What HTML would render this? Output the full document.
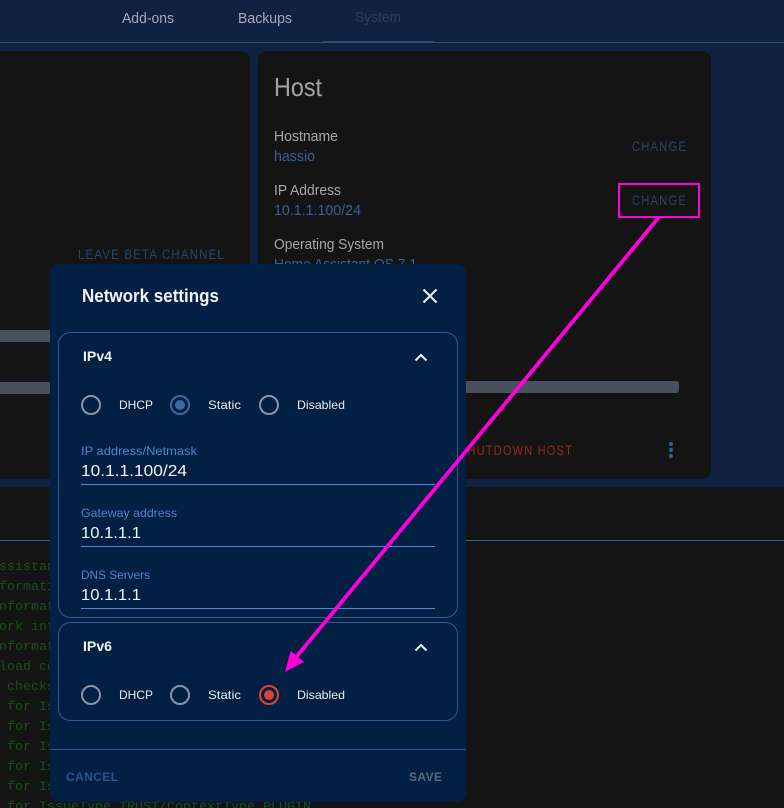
<!DOCTYPE html>
<html>
<head>
<meta charset="utf-8">
<style>
html,body{margin:0;padding:0;width:784px;height:808px;overflow:hidden;background:#112142}
svg{display:block}
text{font-family:"Liberation Sans",sans-serif}
.m{font-family:"Liberation Mono",monospace;font-size:13.33px;fill:#1c4f1c}
.b{font-weight:bold}
</style>
</head>
<body>
<svg width="784" height="808" viewBox="0 0 784 808" xmlns="http://www.w3.org/2000/svg">
<rect width="784" height="808" fill="#112142"/>
<!-- top tabs -->
<text x="122" y="23" font-size="15" fill="#a6abb5" textLength="52" lengthAdjust="spacingAndGlyphs">Add-ons</text>
<text x="238" y="23" font-size="15" fill="#a6abb5" textLength="54" lengthAdjust="spacingAndGlyphs">Backups</text>
<text x="355" y="22" font-size="15" fill="#2a3f66" textLength="46" lengthAdjust="spacingAndGlyphs">System</text>
<rect x="0" y="42" width="784" height="1" fill="#2c4c7c"/>
<rect x="323" y="41" width="111" height="1" fill="#2a4a78"/>

<!-- cards -->
<rect x="-20" y="51" width="270" height="428" rx="9" fill="#141414"/>
<rect x="258" y="51" width="453" height="428" rx="9" fill="#141414"/>
<text x="274" y="96" font-size="26" fill="#a4a4a4" textLength="48" lengthAdjust="spacingAndGlyphs">Host</text>
<text x="274" y="141" font-size="15" fill="#a8a8a8" textLength="64" lengthAdjust="spacingAndGlyphs">Hostname</text>
<text x="274" y="161" font-size="15" fill="#35609c" textLength="41" lengthAdjust="spacingAndGlyphs">hassio</text>
<text x="274" y="195" font-size="15" fill="#a8a8a8" textLength="67" lengthAdjust="spacingAndGlyphs">IP Address</text>
<text x="274" y="215" font-size="15" fill="#35609c" textLength="87" lengthAdjust="spacingAndGlyphs">10.1.1.100/24</text>
<text x="274" y="249" font-size="15" fill="#a8a8a8" textLength="110" lengthAdjust="spacingAndGlyphs">Operating System</text>
<text x="274" y="269" font-size="15" fill="#35609c" textLength="143" lengthAdjust="spacingAndGlyphs">Home Assistant OS 7.1</text>
<text x="632" y="151" font-size="14" letter-spacing="1.500" fill="#2a4468" textLength="55" lengthAdjust="spacingAndGlyphs">CHANGE</text>
<text x="632" y="205" font-size="14" letter-spacing="1.500" fill="#2a4468" textLength="55" lengthAdjust="spacingAndGlyphs">CHANGE</text>
<text x="78" y="259" font-size="14" letter-spacing="1.500" fill="#2a4468" textLength="147" lengthAdjust="spacingAndGlyphs">LEAVE BETA CHANNEL</text>
<rect x="-10" y="330" width="70" height="12" fill="#4a4f5c"/>
<rect x="-10" y="382" width="70" height="12" fill="#4a4f5c"/>
<rect x="440" y="381" width="239" height="12" rx="3" fill="#4a4f5c"/>
<text x="459" y="455" font-size="14" letter-spacing="1.500" fill="#8e2a22" textLength="114" lengthAdjust="spacingAndGlyphs">SHUTDOWN HOST</text>
<circle cx="671" cy="444" r="2" fill="#35609c"/>
<circle cx="671" cy="450" r="2" fill="#35609c"/>
<circle cx="671" cy="456" r="2" fill="#35609c"/>

<!-- log panel -->
<rect x="0" y="487" width="784" height="321" fill="#141414"/>
<rect x="0" y="540" width="784" height="1" fill="#2f5c9c"/>
<text class="m" x="-9" y="570">Assistant</text>
<text class="m" x="-17" y="590">Information</text>
<text class="m" x="-9" y="610">Information</text>
<text class="m" x="-33" y="630">Network info</text>
<text class="m" x="-9" y="650">Information</text>
<text class="m" x="-1" y="670">load config</text>
<text class="m" x="7" y="690">checks</text>
<text class="m" x="7" y="710">for Issue</text>
<text class="m" x="7" y="730">for Issue</text>
<text class="m" x="7" y="750">for Issue</text>
<text class="m" x="7" y="770">for Issue</text>
<text class="m" x="7" y="790">for Issue</text>
<text class="m" x="7" y="810" textLength="304" lengthAdjust="spacingAndGlyphs">for IssueType.TRUST/ContextType.PLUGIN</text>

<!-- dialog -->
<rect x="50" y="264" width="416" height="538" rx="9" fill="#021f44"/>
<text x="82" y="302" font-size="18" class="b" fill="#f2f4f7" textLength="137" lengthAdjust="spacingAndGlyphs">Network settings</text>
<path d="M423.5 289.5 L436.5 302.5 M436.5 289.5 L423.5 302.5" stroke="#f2f4f7" stroke-width="2" fill="none"/>

<rect x="58.5" y="332.5" width="399" height="285" rx="12" fill="none" stroke="#2f5a94"/>
<text x="83" y="361" font-size="14" class="b" fill="#f2f4f7" textLength="29" lengthAdjust="spacingAndGlyphs">IPv4</text>
<path d="M415.5 360.5 L421 355 L426.500 360.5" stroke="#f2f4f7" stroke-width="2" fill="none"/>

<circle cx="91" cy="405" r="9" fill="none" stroke="#8a93a3" stroke-width="2"/>
<text x="119" y="409" font-size="12" fill="#e8ecf2" textLength="34" lengthAdjust="spacingAndGlyphs">DHCP</text>
<circle cx="180" cy="405" r="9" fill="none" stroke="#3a6aa5" stroke-width="2"/>
<circle cx="180" cy="405" r="5" fill="#3a6aa5"/>
<text x="208" y="409" font-size="12" fill="#e8ecf2" textLength="33" lengthAdjust="spacingAndGlyphs">Static</text>
<circle cx="269" cy="405" r="9" fill="none" stroke="#8a93a3" stroke-width="2"/>
<text x="297" y="409" font-size="12" fill="#e8ecf2" textLength="48" lengthAdjust="spacingAndGlyphs">Disabled</text>

<text x="81" y="455" font-size="12" fill="#4a86d0" textLength="116" lengthAdjust="spacingAndGlyphs">IP address/Netmask</text>
<text x="81" y="476" font-size="16" fill="#f2f4f7" textLength="106" lengthAdjust="spacingAndGlyphs">10.1.1.100/24</text>
<rect x="81" y="484" width="354" height="1" fill="#4a8ad8"/>
<text x="81" y="517" font-size="12" fill="#4a86d0" textLength="96" lengthAdjust="spacingAndGlyphs">Gateway address</text>
<text x="81" y="538" font-size="16" fill="#f2f4f7" textLength="60" lengthAdjust="spacingAndGlyphs">10.1.1.1</text>
<rect x="81" y="546" width="354" height="1" fill="#4a8ad8"/>
<text x="81" y="579" font-size="12" fill="#4a86d0" textLength="69" lengthAdjust="spacingAndGlyphs">DNS Servers</text>
<text x="81" y="600" font-size="16" fill="#f2f4f7" textLength="60" lengthAdjust="spacingAndGlyphs">10.1.1.1</text>
<rect x="81" y="608" width="354" height="1" fill="#4a8ad8"/>

<rect x="58.5" y="622.5" width="399" height="98" rx="12" fill="none" stroke="#2f5a94"/>
<text x="83" y="651" font-size="14" class="b" fill="#f2f4f7" textLength="29" lengthAdjust="spacingAndGlyphs">IPv6</text>
<path d="M415.5 650.5 L421 645 L426.500 650.5" stroke="#f2f4f7" stroke-width="2" fill="none"/>

<circle cx="91" cy="695" r="9" fill="none" stroke="#8a93a3" stroke-width="2"/>
<text x="119" y="699" font-size="12" fill="#e8ecf2" textLength="34" lengthAdjust="spacingAndGlyphs">DHCP</text>
<circle cx="180" cy="695" r="9" fill="none" stroke="#8a93a3" stroke-width="2"/>
<text x="208" y="699" font-size="12" fill="#e8ecf2" textLength="33" lengthAdjust="spacingAndGlyphs">Static</text>
<circle cx="269" cy="695" r="9" fill="none" stroke="#dd4433" stroke-width="2"/>
<circle cx="269" cy="695" r="5" fill="#dd4433"/>
<text x="297" y="699" font-size="12" fill="#e8ecf2" textLength="48" lengthAdjust="spacingAndGlyphs">Disabled</text>

<rect x="50" y="749" width="416" height="1" fill="#2f5a94"/>
<text x="66" y="781" font-size="12" class="b" fill="#2a5590" textLength="52" lengthAdjust="spacing">CANCEL</text>
<text x="409" y="781" font-size="12" class="b" fill="#5a6a80" textLength="33" lengthAdjust="spacing">SAVE</text>

<!-- annotation -->
<rect x="619" y="184" width="80" height="33" fill="none" stroke="#ff00dd" stroke-width="2"/>
<path d="M659 217 L297 656" stroke="#ff00dd" stroke-width="3.800" fill="none"/>
<polygon points="285,671.700 304,662 290.700,650.700" fill="#ff00dd"/>
</svg>
</body>
</html>
